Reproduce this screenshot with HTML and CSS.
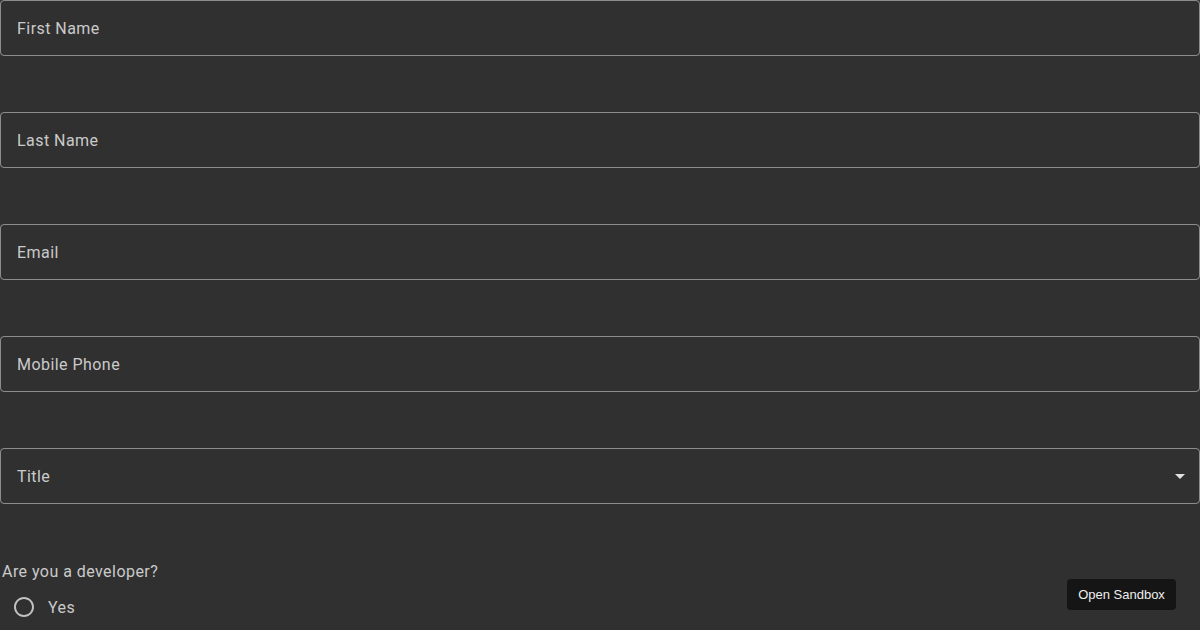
FILE: index.html
```html
<!DOCTYPE html>
<html lang="en">
<head>
    <meta charset="UTF-8">
    <meta name="viewport" content="width=device-width, initial-scale=1.0">
    <title>Form</title>
    <link rel="stylesheet" href="styles.css">
</head>
<body>
    <form class="form">
        <div class="field"><span class="field-label">First Name</span></div>
        <div class="field"><span class="field-label">Last Name</span></div>
        <div class="field"><span class="field-label">Email</span></div>
        <div class="field"><span class="field-label">Mobile Phone</span></div>
        <div class="field select">
            <span class="field-label">Title</span>
            <svg class="arrow" viewBox="0 0 24 24" width="24" height="24"><path d="M7 10l5 5 5-5z"></path></svg>
        </div>

        <div class="group">
            <div class="group-label">Are you a developer?</div>
            <label class="radio-row">
                <span class="radio">
                    <svg viewBox="0 0 24 24" width="24" height="24"><path d="M12 2C6.48 2 2 6.48 2 12s4.48 10 10 10 10-4.48 10-10S17.52 2 12 2zm0 18c-4.42 0-8-3.58-8-8s3.58-8 8-8 8 3.58 8 8-3.58 8-8 8z"></path></svg>
                </span>
                <span class="radio-text">Yes</span>
            </label>
        </div>
    </form>

    <a class="sandbox" href="#">Open Sandbox</a>
</body>
</html>
```

FILE: styles.css
```css
*{
    margin: 0;
    padding: 0;
    box-sizing: border-box;
}

body{
    background: #303030;
    font-family: Roboto, "Liberation Sans", sans-serif;
    color: rgba(255,255,255,0.75);
    overflow: hidden;
}

.form{
    display: flex;
    flex-direction: column;
    gap: 56px;
}

.field{
    height: 56px;
    border: 1px solid rgba(255,255,255,0.45);
    border-radius: 4px;
    display: flex;
    align-items: center;
    padding: 0 7px 0 16px;
}

.field-label{
    font-size: 16px;
    letter-spacing: 0.45px;
    flex: 1;
}

.arrow{
    fill: rgba(255,255,255,0.85);
}

.group{
    display: flex;
    flex-direction: column;
    padding-left: 2px;
}

.group-label{
    font-size: 16px;
    line-height: 23px;
    letter-spacing: 0.45px;
}

.radio-row{
    display: flex;
    align-items: center;
    margin-top: 3px;
    margin-left: 1px;
}

.radio{
    padding: 9px;
    display: flex;
}

.radio svg{
    fill: rgba(255,255,255,0.7);
}

.radio-text{
    font-size: 16px;
    letter-spacing: 0.45px;
    margin-left: 3px;
}

.sandbox{
    position: fixed;
    right: 24px;
    bottom: 20px;
    width: 109px;
    height: 31px;
    background: #151515;
    border-radius: 4px;
    color: #eee;
    font-family: "Liberation Sans", Arial, sans-serif;
    font-size: 13px;
    text-decoration: none;
    display: flex;
    align-items: center;
    justify-content: center;
}
```
